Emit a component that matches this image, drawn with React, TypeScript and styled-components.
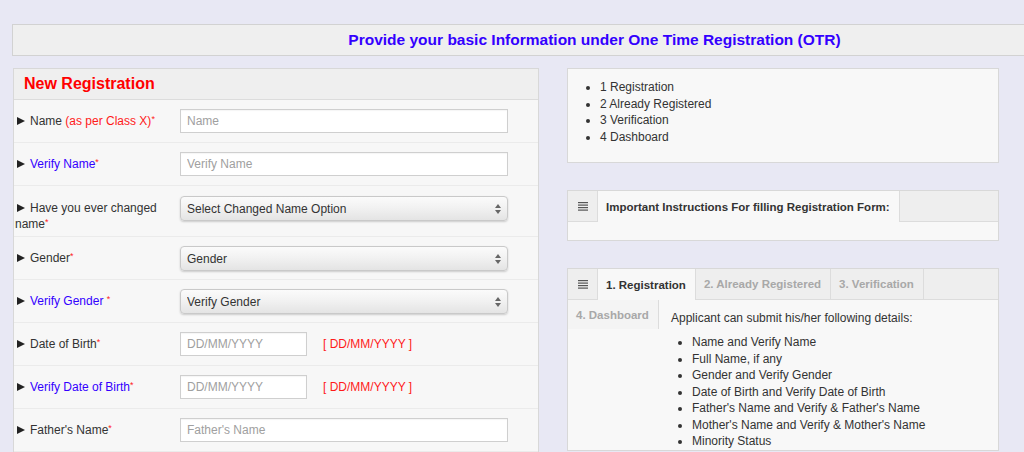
import * as React from "react";
import styled, {createGlobalStyle} from "styled-components";

const GlobalStyle = createGlobalStyle`
  html, body {
    margin: 0;
    padding: 0;
    overflow: hidden;
    background: #e8e8f4;
    font-family: "Liberation Sans", Arial, sans-serif;
    font-size: 12px;
    color: #333;
  }
`

const Page = styled.div`
  padding: 24px 0 0 12px;
`

const Banner = styled.div`
  box-sizing: border-box;
  height: 32px;
  display: flex;
  align-items: center;
  justify-content: center;
  padding-left: 152px;
  background: #efefef;
  border: 1px solid #d2d2d2;
  border-right: none;
  color: #3300ff;
  font-weight: bold;
  font-size: 15.5px;
`

const Columns = styled.div`
  display: flex;
  align-items: flex-start;
  gap: 28px;
  margin: 12px 0 0 1px;
`

const FormPanel = styled.div`
  box-sizing: border-box;
  width: 526px;
  flex-shrink: 0;
  background: #f7f7f7;
  border: 1px solid #d8d8d8;
`

const PanelHead = styled.div`
  height: 30px;
  display: flex;
  align-items: center;
  padding-left: 10px;
  background: #efefef;
  border-bottom: 1px solid #dcdcdc;
  color: #ff0000;
  font-weight: bold;
  font-size: 16px;
`

const Row = styled.div<{ $tall?: boolean }>`
  display: grid;
  grid-template-columns: 165px 1fr;
  align-items: ${p => p.$tall ? "start" : "center"};
  padding: ${p => p.$tall ? "10px 0 4px 1px" : "9px 0 9px 1px"};
  border-bottom: 1px solid #ebebeb;
`

const Label = styled.div<{ $tone?: "blue"; $tall?: boolean }>`
  padding-right: 12px;
  margin-top: ${p => p.$tall ? "4px" : "0"};
  line-height: 16px;
  color: ${p => p.$tone === "blue" ? "#3300ff" : "#333"};
`

const Arrow = styled.span`
  display: inline-block;
  width: 0;
  height: 0;
  margin: 0 5px 0 2px;
  border-left: 8px solid #222;
  border-top: 4.5px solid transparent;
  border-bottom: 4.5px solid transparent;
`

const Red = styled.span`
  color: #ff1a1a;
`

const Star = styled.span`
  color: #ff1a1a;
  font-size: 9px;
  vertical-align: top;
  line-height: 12px;
`

const Field = styled.div`
  display: flex;
  align-items: center;
`

const TextInput = styled.input<{ $short?: boolean }>`
  box-sizing: border-box;
  width: ${p => p.$short ? "127px" : "328px"};
  height: 24px;
  padding: 0 6px;
  border: 1px solid #cfcfcf;
  background: #fff;
  box-shadow: inset 0 1px 1px rgba(0, 0, 0, 0.04);
  font-family: inherit;
  font-size: 12px;
  color: #333;
  outline: none;

  &::placeholder {
    color: #a0a0a0;
  }
`

const Hint = styled.span`
  margin-left: 16px;
  color: #ff1a1a;
`

const SelectWrap = styled.div`
  position: relative;
  width: 328px;
  height: 25px;
  margin-bottom: -1px;
`

const Select = styled.select`
  box-sizing: border-box;
  appearance: none;
  width: 100%;
  height: 100%;
  padding: 0 6px;
  border: 1px solid #c9c9c9;
  border-radius: 4px;
  background: linear-gradient(#fbfbfb, #f2f2f2 45%, #e4e4e4);
  box-shadow: 0 1px 2px rgba(0, 0, 0, 0.18);
  font-family: inherit;
  font-size: 12px;
  color: #333;
`

const SelectArrows = styled.svg`
  position: absolute;
  right: 7px;
  top: 8px;
  pointer-events: none;
`

const Side = styled.div`
  width: 432px;
  flex-shrink: 0;
  display: flex;
  flex-direction: column;
  gap: 27px;
`

const Box = styled.div`
  box-sizing: border-box;
  background: #f8f8f8;
  border: 1px solid #d8d8d8;
`

const StepList = styled.ul`
  margin: 0;
  padding: 10px 0 17px 32px;

  li {
    line-height: 16.5px;
  }
`

const TabBar = styled.div`
  display: flex;
  height: 30px;
  background: #eeeeee;
  border-bottom: 1px solid #dcdcdc;
`

const TabIcon = styled.div`
  width: 29px;
  display: flex;
  align-items: center;
  justify-content: center;
  border-right: 1px solid #dcdcdc;
`

const Tab = styled.div<{ $active?: boolean }>`
  display: flex;
  align-items: center;
  padding: 0 9px 0 8px;
  border-right: 1px solid #dcdcdc;
  background: ${p => p.$active ? "#f8f8f8" : "#eeeeee"};
  color: ${p => p.$active ? "#333" : "#a8a8a8"};
  font-weight: bold;
  font-size: 11.5px;
  margin-bottom: ${p => p.$active ? "-1px" : "0"};
`

const Spacer = styled.div`
  height: 18px;
`

const TabBody = styled.div`
  display: flex;
  align-items: flex-start;
`

const WrappedTab = styled.div`
  box-sizing: border-box;
  width: 91px;
  height: 29px;
  flex-shrink: 0;
  display: flex;
  align-items: center;
  padding-left: 8px;
  background: #f4f4f4;
  border-right: 1px solid #dcdcdc;
  color: #a8a8a8;
  font-weight: bold;
  font-size: 11.5px;
`

const Content = styled.div`
  padding: 10px 0 0 12px;
  line-height: 16px;
`

const Details = styled.ul`
  margin: 8px 0 0;
  padding-left: 21px;

  li {
    line-height: 16.5px;
  }
`

const MenuIcon = () => (
    <svg width="10" height="9" viewBox="0 0 10 9">
        {[0.5, 3, 5.5, 8].map(y => <rect key={y} x="0" y={y - 0.5} width="10" height="1.2" fill="#555"/>)}
    </svg>
)

const Dropdown = ({label}: { label: string }) => (
    <SelectWrap>
        <Select defaultValue="">
            <option value="">{label}</option>
        </Select>
        <SelectArrows width="6" height="10" viewBox="0 0 6 10">
            <path d="M3 0 L6 4 L0 4 Z" fill="#666"/>
            <path d="M0 6 L6 6 L3 10 Z" fill="#666"/>
        </SelectArrows>
    </SelectWrap>
)

const details = [
    "Name and Verify Name",
    "Full Name, if any",
    "Gender and Verify Gender",
    "Date of Birth and Verify Date of Birth",
    "Father's Name and Verify & Father's Name",
    "Mother's Name and Verify & Mother's Name",
    "Minority Status",
]

const App = () => {
    return (
        <Page>
            <GlobalStyle/>
            <Banner>Provide your basic Information under One Time Registration (OTR)</Banner>
            <Columns>
                <FormPanel>
                    <PanelHead>New Registration</PanelHead>
                    <Row>
                        <Label><Arrow/>Name <Red>(as per Class X)</Red><Star>*</Star></Label>
                        <Field><TextInput placeholder="Name"/></Field>
                    </Row>
                    <Row>
                        <Label $tone="blue"><Arrow/>Verify Name<Star>*</Star></Label>
                        <Field><TextInput placeholder="Verify Name"/></Field>
                    </Row>
                    <Row $tall>
                        <Label $tall><Arrow/>Have you ever changed name<Star>*</Star></Label>
                        <Field><Dropdown label="Select Changed Name Option"/></Field>
                    </Row>
                    <Row>
                        <Label><Arrow/>Gender<Star>*</Star></Label>
                        <Field><Dropdown label="Gender"/></Field>
                    </Row>
                    <Row>
                        <Label $tone="blue"><Arrow/>Verify Gender <Star>*</Star></Label>
                        <Field><Dropdown label="Verify Gender"/></Field>
                    </Row>
                    <Row>
                        <Label><Arrow/>Date of Birth<Star>*</Star></Label>
                        <Field><TextInput $short placeholder="DD/MM/YYYY"/><Hint>[ DD/MM/YYYY ]</Hint></Field>
                    </Row>
                    <Row>
                        <Label $tone="blue"><Arrow/>Verify Date of Birth<Star>*</Star></Label>
                        <Field><TextInput $short placeholder="DD/MM/YYYY"/><Hint>[ DD/MM/YYYY ]</Hint></Field>
                    </Row>
                    <Row>
                        <Label><Arrow/>Father's Name<Star>*</Star></Label>
                        <Field><TextInput placeholder="Father's Name"/></Field>
                    </Row>
                    <Row>
                        <Label $tone="blue"><Arrow/>Verify Father's Name<Star>*</Star></Label>
                        <Field><TextInput placeholder="Verify Father's Name"/></Field>
                    </Row>
                </FormPanel>
                <Side>
                    <Box>
                        <StepList>
                            <li>1 Registration</li>
                            <li>2 Already Registered</li>
                            <li>3 Verification</li>
                            <li>4 Dashboard</li>
                        </StepList>
                    </Box>
                    <Box>
                        <TabBar>
                            <TabIcon><MenuIcon/></TabIcon>
                            <Tab $active>Important Instructions For filling Registration Form:</Tab>
                        </TabBar>
                        <Spacer/>
                    </Box>
                    <Box>
                        <TabBar>
                            <TabIcon><MenuIcon/></TabIcon>
                            <Tab $active>1. Registration</Tab>
                            <Tab>2. Already Registered</Tab>
                            <Tab>3. Verification</Tab>
                        </TabBar>
                        <TabBody>
                            <WrappedTab>4. Dashboard</WrappedTab>
                            <Content>
                                Applicant can submit his/her following details:
                                <Details>
                                    {details.map(d => <li key={d}>{d}</li>)}
                                </Details>
                            </Content>
                        </TabBody>
                    </Box>
                </Side>
            </Columns>
        </Page>
    )
};

export default App;
